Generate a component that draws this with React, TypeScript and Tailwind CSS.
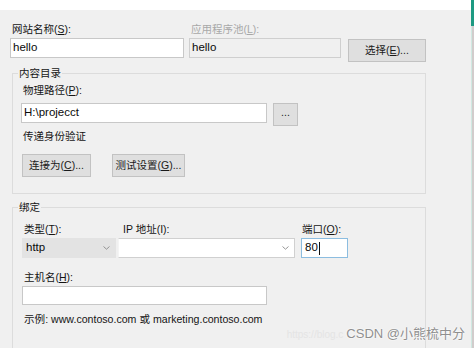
import React from "react";

const F = { fontFamily: '"Liberation Sans", "Noto Sans CJK SC", sans-serif' };

function Acc({ pre, k, post = "):" }: { pre: string; k: string; post?: string }) {
  return (
    <span>
      {pre}(<span className="underline underline-offset-[1px]">{k}</span>
      {post}
    </span>
  );
}

function Chevron() {
  return (
    <svg width="7" height="4" viewBox="0 0 7 4" className="shrink-0">
      <path d="M0.5 0.5 L3.5 3.2 L6.5 0.5" fill="none" stroke="#8a8a8a" strokeWidth="0.9" />
    </svg>
  );
}

const btn =
  "h-[23px] bg-[#dfdfdf] border border-[#c2c2c2] flex items-center justify-center text-[10.5px] text-[#1a1a1a] whitespace-nowrap";
const label = "h-[14px] leading-[14px] text-[10.5px] text-[#151515] whitespace-nowrap";
const inputText = "text-[11.5px] text-[#0a0a0a]";

export default function App() {
  return (
    <div style={F} className="w-[474px] h-[348px] bg-[#f0f0f0] flex overflow-hidden relative">
      <div className="w-[471px] flex flex-col">
        <div className="h-[10px] bg-white shrink-0" />
        <div className="pl-[10px]">
          {/* row 1 */}
          <div className="flex mt-[12px]">
            <div className="w-[174px] flex flex-col">
              <div className={label + " pl-[2px]"}>
                <Acc pre="网站名称" k="S" />
              </div>
              <div className={"mt-[2px] h-[20px] bg-white border border-[#c8c8c8] flex items-center pl-[2px] " + inputText}>
                hello
              </div>
            </div>
            <div className="w-[152px] ml-[5px] flex flex-col">
              <div className={label + " pl-[2px] text-[#a8a8a8]"}>
                <Acc pre="应用程序池" k="L" />
              </div>
              <div className={"mt-[2px] h-[20px] bg-[#f0f0f0] border border-[#cfcfcf] flex items-center pl-[2px] " + inputText}>
                hello
              </div>
            </div>
            <div className={btn + " w-[78px] ml-[7px] mt-[17px]"}>
              <Acc pre="选择" k="E" post=")..." />
            </div>
          </div>

          {/* group 1 */}
          <fieldset className="ml-[2px] w-[414px] mt-[4px] border border-[#dcdcdc] p-0 pb-[16px]">
            <legend className={label + " ml-[5px] px-[1px]"}>内容目录</legend>
            <div className="pt-[3px] pl-[10px]">
              <div className={label}>
                <Acc pre="物理路径" k="P" />
              </div>
              <div className="flex mt-[6px] -ml-[2px] items-start">
                <div className={"w-[246px] h-[20px] bg-white border border-[#c8c8c8] flex items-center pl-[2px] " + inputText}>
                  H:\projecct
                </div>
                <div className={btn + " w-[25px] h-[22px] ml-[6px] text-[9px] pb-[3px]"}>...</div>
              </div>
              <div className={label + " mt-[3px]"}>传递身份验证</div>
              <div className="flex mt-[11px] -ml-[1px]">
                <div className={btn + " w-[69px]"}>
                  <Acc pre="连接为" k="C" post=")..." />
                </div>
                <div className={btn + " w-[73px] ml-[21px]"}>
                  <Acc pre="测试设置" k="G" post=")..." />
                </div>
              </div>
            </div>
          </fieldset>

          {/* group 2 */}
          <fieldset className="ml-[2px] w-[414px] mt-[6px] border border-[#dcdcdc] p-0 pb-[40px]">
            <legend className={label + " ml-[5px] px-[1px]"}>绑定</legend>
            <div className="pt-[8px] pl-[9px]">
              <div className="flex">
                <div className="w-[94px] flex flex-col">
                  <div className={label + " pl-[2px]"}>
                    <Acc pre="类型" k="T" />
                  </div>
                  <div className={"mt-[2px] h-[20px] bg-[#e3e3e3] flex items-center justify-between pl-[4px] pr-[6px] " + inputText}>
                    http
                    <Chevron />
                  </div>
                </div>
                <div className="w-[177px] ml-[2px] flex flex-col">
                  <div className={label + " pl-[5px]"}>IP 地址(I):</div>
                  <div className="mt-[2px] h-[20px] bg-white border border-[#d0d0d0] border-l-[#f4f4f4] flex items-center justify-end pr-[5px]">
                    <Chevron />
                  </div>
                </div>
                <div className="w-[47px] ml-[6px] flex flex-col">
                  <div className={label + " pl-[1px]"}>
                    <Acc pre="端口" k="O" />
                  </div>
                  <div className={"mt-[2px] h-[20px] bg-white border border-[#8cbde0] flex items-center pl-[3px] " + inputText}>
                    80
                    <span className="inline-block w-[1px] h-[13px] bg-[#111] ml-[1px]" />
                  </div>
                </div>
              </div>
              <div className={label + " mt-[12px] pl-[2px]"}>
                <Acc pre="主机名" k="H" />
              </div>
              <div className="mt-[2px] w-[245px] h-[19px] bg-white border border-[#c8c8c8]" />
              <div className="h-[14px] leading-[14px] text-[10.6px] text-[#151515] whitespace-nowrap mt-[7px] pl-[2px]">
                示例: www.contoso.com 或 marketing.contoso.com
              </div>
            </div>
          </fieldset>
        </div>
      </div>
      <div className="w-[3px] flex flex-col">
        <div className="h-[26px] bg-[#1d9a82]" />
        <div className="flex-1 bg-[#d2cccc] border-l border-[#cfe9e2]" />
      </div>

      {/* watermark */}
      <div className="absolute right-[9px] bottom-[5px] flex items-end whitespace-nowrap">
        <span className="text-[10px] text-[#e4e4e4] mr-[3px] mb-[1px]">https://blog.c</span>
        <span
          className="text-[13px] leading-[18px] text-[#8f8f8f]"
          style={{ textShadow: "0 0 2px #fff, 0 0 2px #fff" }}
        >
          CSDN @小熊梳中分
        </span>
      </div>
    </div>
  );
}
